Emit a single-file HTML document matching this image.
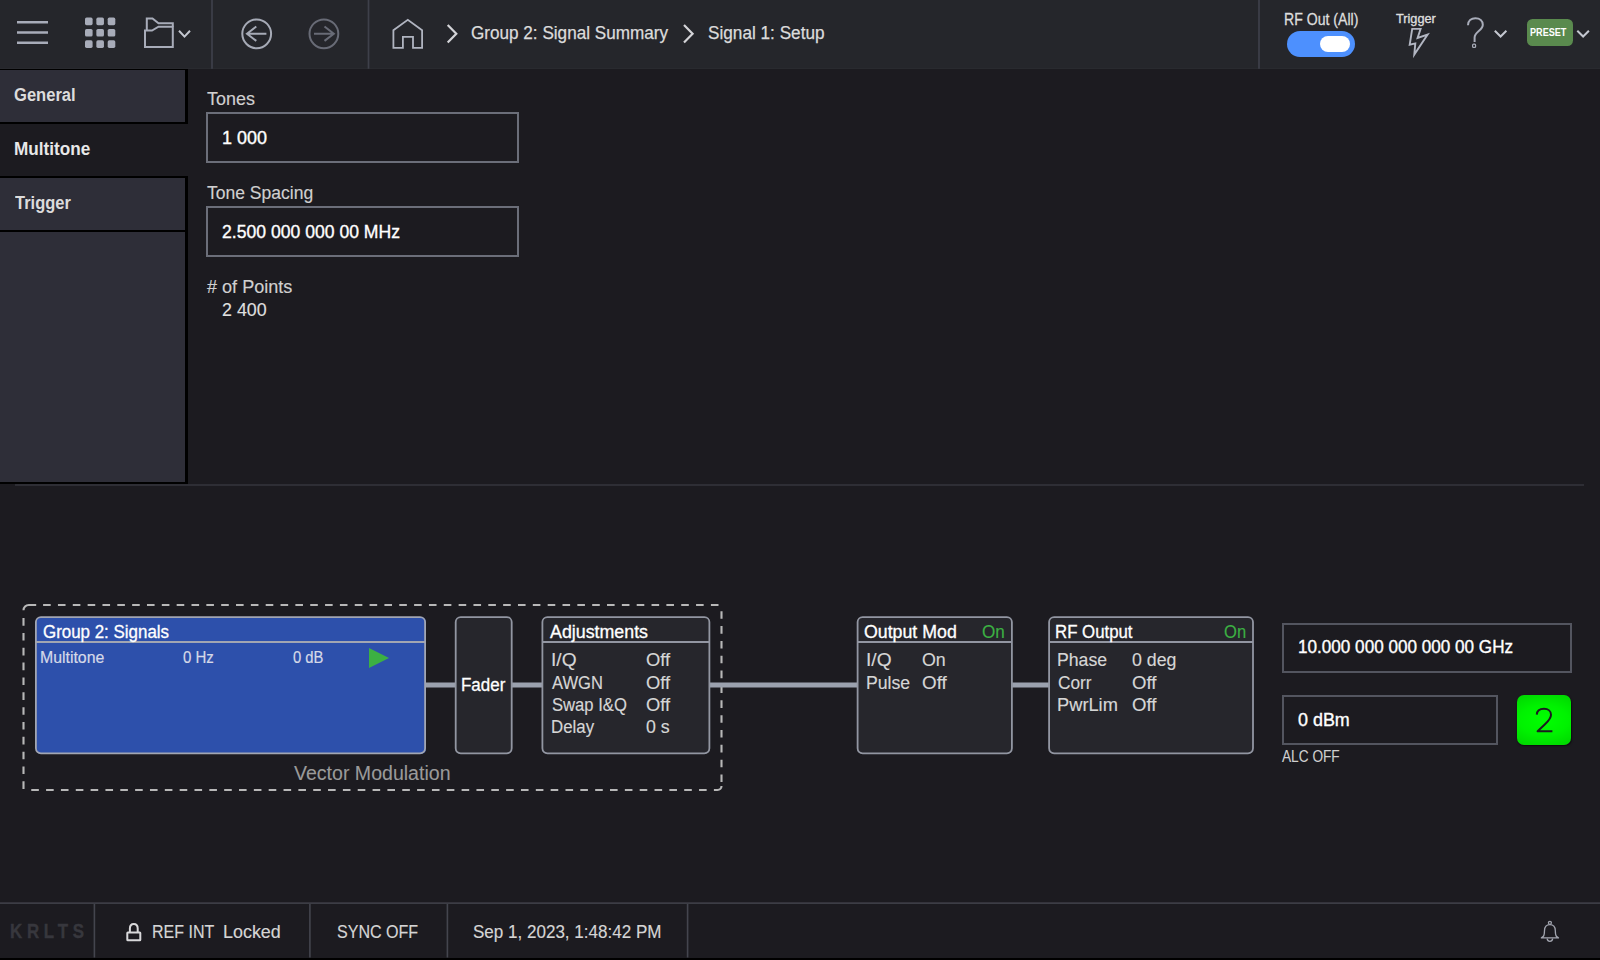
<!DOCTYPE html>
<html lang="en"><head><meta charset="utf-8"><title>Signal 1: Setup</title>
<style>
html,body{margin:0;padding:0;background:#1c1b20;}
body{width:1600px;height:960px;position:relative;overflow:hidden;font-family:"Liberation Sans",sans-serif;}
.t{position:absolute;white-space:pre;line-height:1;transform-origin:0 0;}
.abs{position:absolute;}
#topbar{position:absolute;left:0;top:0;width:1600px;height:69px;background:#25262b;box-sizing:border-box;border-bottom:1px solid #292a2f;}
#sidebar{position:absolute;left:0;top:69px;width:188px;height:415px;background:#000;}
.tab{position:absolute;left:0;width:185px;background:#2e2e38;}
.inp{position:absolute;box-sizing:border-box;border:2px solid #6b6e79;}
.inp2{position:absolute;box-sizing:border-box;border:2px solid #53555f;}
.blk{position:absolute;border-radius:5px;}
svg{position:absolute;left:0;top:0;overflow:visible;}
</style></head><body>

<div id="topbar">
  <div class="abs" style="left:1287px;top:31px;width:68px;height:25.5px;border-radius:13px;background:#4d90fe;"></div>
  <div class="abs" style="left:1320px;top:35.5px;width:30.4px;height:16.2px;border-radius:8.1px;background:#fff;"></div>
  <div class="abs" style="left:1527.25px;top:19px;width:45.5px;height:26.6px;border-radius:5.5px;background:#5a8a4e;"></div>
</div>

<svg width="1600" height="70" viewBox="0 0 1600 70" fill="none" stroke-linecap="butt" stroke-linejoin="miter">
  <!-- separators -->
  <path d="M212 0V68.8M368.5 0V68.8M1259 0V68.8" stroke="#3e404a" stroke-width="1.7"/>
  <!-- hamburger -->
  <g stroke="#a8acb9" stroke-width="2.6">
    <path d="M17 22.3H48M17 32.5H48M17 42.8H48"/>
  </g>
  <!-- grid -->
  <g fill="#a8acb9" stroke="none">
    <rect x="85.00" y="17.60" width="7.6" height="7.6" rx="1.6"/><rect x="85.00" y="28.95" width="7.6" height="7.6" rx="1.6"/><rect x="85.00" y="40.30" width="7.6" height="7.6" rx="1.6"/><rect x="96.35" y="17.60" width="7.6" height="7.6" rx="1.6"/><rect x="96.35" y="28.95" width="7.6" height="7.6" rx="1.6"/><rect x="96.35" y="40.30" width="7.6" height="7.6" rx="1.6"/><rect x="107.70" y="17.60" width="7.6" height="7.6" rx="1.6"/><rect x="107.70" y="28.95" width="7.6" height="7.6" rx="1.6"/><rect x="107.70" y="40.30" width="7.6" height="7.6" rx="1.6"/>
  </g>
  <!-- folder -->
  <g stroke="#a8acb9" stroke-width="2">
    <path d="M145 30.5H152L158.5 26.7H172.8V46.9H145Z"/>
    <path d="M146.8 30.5V18.5H152.5L158.5 23.2H172.8V26.7"/>
  </g>
  <path d="M179 30.8L184.5 36.6L190 30.8" stroke="#c4c7d0" stroke-width="2"/>
  <!-- back / forward -->
  <g stroke="#a6aab6" stroke-width="2">
    <circle cx="256.7" cy="33.8" r="14.4"/>
    <path d="M266.4 33.8H247M256.3 26.5L247 33.8L256.3 40.9"/>
  </g>
  <g stroke="#686b76" stroke-width="2">
    <circle cx="323.9" cy="33.8" r="14.4"/>
    <path d="M314 33.8H333.4M324.5 26.5L333.8 33.8L324.5 40.9"/>
  </g>
  <!-- home -->
  <path d="M393.4 47.8V30.3L407.8 19.8L422.1 30.3V47.8H413V36.9H402.9V47.8Z" stroke="#b0b4c0" stroke-width="1.8"/>
  <!-- breadcrumb chevrons -->
  <g stroke="#d4d4d8" stroke-width="2.2">
    <path d="M447.7 25L456.3 33.8L447.7 42.6"/>
    <path d="M684 25L692.6 33.8L684 42.6"/>
  </g>
  <!-- trigger bolt -->
  <path d="M1412.2 28.9H1420.6L1417.6 38L1427.6 34.6L1414.3 54.6L1415.3 43.4L1409.7 44.7Z" stroke="#b2b6c2" stroke-width="1.9" stroke-linejoin="miter" stroke-miterlimit="10"/>
  <!-- help -->
  <g stroke="#a8acb9" stroke-width="2">
    <path d="M1468 25.2C1468 20.8 1471.2 18.2 1475.4 18.2C1479.8 18.2 1482.8 21 1482.8 24.8C1482.8 30.5 1474.6 31.5 1474.6 37.5V42"/>
    <rect x="1472.6" y="44.2" width="3" height="3.2" rx="1" stroke-width="1.2"/>
  </g>
  <g stroke="#c4c7d0" stroke-width="2">
    <path d="M1494.8 30.8L1500.6 36.5L1506.4 30.8"/>
    <path d="M1577.3 30.8L1583.1 36.5L1588.9 30.8"/>
  </g>
</svg>

<div id="sidebar">
  <div class="tab" style="top:1px;height:52px"></div>
  <div class="abs" style="left:0;top:55px;width:188px;height:52px;background:#1c1b20"></div>
  <div class="tab" style="top:109px;height:52px"></div>
  <div class="tab" style="top:162.5px;height:250px"></div>
</div>
<div class="abs" style="left:15px;top:484px;width:1569px;height:2px;background:#2e2e35"></div>

<div class="inp" style="left:206px;top:112px;width:313px;height:51px"></div>
<div class="inp" style="left:206px;top:206px;width:313px;height:50.5px"></div>

<!-- diagram -->
<svg width="1600" height="960" viewBox="0 0 1600 960" fill="none">
  <g stroke="#b8b8b8" stroke-width="2.1" stroke-dasharray="7.6 7.24">
    <path d="M43.1 605H719"/>
    <path d="M721.5 611.25V783"/>
    <path d="M31.25 790H707"/>
    <path d="M23.5 618.1V789"/>
  </g>
  <g stroke="#b8b8b8" stroke-width="2.1">
    <path d="M23.5 610.3A5.3 5.3 0 0 1 28.8 605H36.2"/>
    <path d="M713.9 790H717.5A4 4 0 0 0 721.5 786"/>
  </g>
</svg>
<svg width="1600" height="960" viewBox="0 0 1600 960" fill="none">
  <path d="M425 685H456M511.5 685H543M709 685H858M1011.5 685H1049.5" stroke="#9ba1ae" stroke-width="5"/>
</svg>
<div class="blk" style="left:35.5px;top:616.7px;width:390.0px;height:137.0px;background:#2d50ab"></div>
<div class="blk" style="left:455.3px;top:616.7px;width:56.8px;height:137.0px;background:#26262c"></div>
<div class="blk" style="left:542.0px;top:616.7px;width:167.8px;height:137.0px;background:#26262c"></div>
<div class="blk" style="left:857.2px;top:616.7px;width:155.1px;height:137.0px;background:#26262c"></div>
<div class="blk" style="left:1048.7px;top:616.7px;width:204.7px;height:137.0px;background:#26262c"></div>
<div class="abs" style="left:369px;top:647.75px;width:0;height:0;border-left:20px solid #3cb043;border-top:10.1px solid transparent;border-bottom:10.1px solid transparent"></div>
<svg width="1600" height="960" viewBox="0 0 1600 960" fill="none" stroke-width="1.8">
  <rect x="35.9" y="617.1" width="389.2" height="136.2" rx="5" stroke="#a2a6b2"/><path d="M35.9 642H425.1" stroke="#a2a6b2"/>
  <rect x="455.7" y="617.1" width="56.0" height="136.2" rx="5" stroke="#9296a2"/>
  <rect x="542.4" y="617.1" width="167.0" height="136.2" rx="5" stroke="#9296a2"/><path d="M542.4 642H709.4" stroke="#9296a2"/>
  <rect x="857.6" y="617.1" width="154.3" height="136.2" rx="5" stroke="#9296a2"/><path d="M857.6 642H1011.9" stroke="#9296a2"/>
  <rect x="1049.1" y="617.1" width="203.9" height="136.2" rx="5" stroke="#9296a2"/><path d="M1049.1 642H1253.0" stroke="#9296a2"/>
</svg>
<div class="inp2" style="left:1282px;top:623px;width:289.5px;height:50px"></div>
<div class="inp2" style="left:1282px;top:695px;width:215.7px;height:50px"></div>
<div class="abs" style="left:1517px;top:694.8px;width:54.3px;height:50.2px;border-radius:7px;background:radial-gradient(ellipse 90% 60% at 50% 50%,#00ff00 0%,#00f200 50%,#00d400 100%);box-shadow:0.5px 1px 1.5px rgba(0,0,0,.55)"></div>
<svg width="1600" height="960" viewBox="0 0 1600 960" fill="none">
  <path d="M1536.8 714.6C1537 710.6 1540 708.7 1544 708.7C1548.2 708.7 1551 711.2 1551 714.8C1551 718.5 1548.5 721 1545 724.3L1537.6 731.2H1552.4" stroke="#1c1b20" stroke-width="2" stroke-linejoin="round"/>
</svg>

<!-- status bar -->
<div class="abs" style="left:0;top:957.5px;width:1600px;height:2.5px;background:#000"></div>
<svg width="1600" height="960" viewBox="0 0 1600 960" fill="none">
  <path d="M0 903.2H1600" stroke="#3c3d45" stroke-width="1.8"/>
  <path d="M94.4 904V957.5M309.9 904V957.5M447.4 904V957.5M687.6 904V957.5" stroke="#44454e" stroke-width="1.6"/>
  <g stroke="#d8d8da" stroke-width="2">
    <rect x="127.3" y="932.5" width="13" height="7.8" rx="0.5"/>
    <path d="M129.9 932.5V928.5C129.9 925.6 131.6 924 133.8 924C136 924 137.7 925.6 137.7 928.5V932.5"/>
  </g>
  <g stroke="#a2a5af" stroke-width="1.3" stroke-linejoin="round">
    <circle cx="1549.9" cy="922.8" r="1.5"/>
    <path d="M1549.9 924.6C1546.5 924.6 1544.6 927 1544.5 930.5C1544.4 933.5 1544.2 935.2 1543.6 936C1543 936.8 1542 937.3 1541.3 937.9H1558.5C1557.8 937.3 1556.8 936.8 1556.2 936C1555.6 935.2 1555.4 933.5 1555.3 930.5C1555.2 927 1553.3 924.6 1549.9 924.6Z"/>
    <path d="M1547.1 938.6C1547.4 940.4 1548.5 941.3 1549.9 941.3C1551.3 941.3 1552.4 940.4 1552.7 938.6"/>
  </g>
</svg>

<!-- text -->
<span class="t" style="left:471px;top:25px;font-size:17.5px;color:#dcdcdc;-webkit-text-stroke:0.25px #dcdcdc;transform:scaleX(0.9785)">Group 2: Signal Summary</span>
<span class="t" style="left:708px;top:25px;font-size:17.5px;color:#dcdcdc;-webkit-text-stroke:0.25px #dcdcdc;transform:scaleX(0.9819)">Signal 1: Setup</span>
<span class="t" style="left:1284px;top:11px;font-size:16.25px;color:#dedede;-webkit-text-stroke:0.3px #dedede;transform:scaleX(0.8666)">RF Out (All)</span>
<span class="t" style="left:1396px;top:13px;font-size:12.5px;color:#dedede;-webkit-text-stroke:0.35px #dedede;transform:scaleX(1.0172)">Trigger</span>
<span class="t" style="left:1530px;top:28px;font-size:10px;color:#ffffff;font-weight:bold;transform:scaleX(0.9104)">PRESET</span>
<span class="t" style="left:14px;top:87px;font-size:17.5px;color:#dcdcdc;font-weight:bold;transform:scaleX(0.9460)">General</span>
<span class="t" style="left:14px;top:141px;font-size:17.5px;color:#e8e8e8;font-weight:bold;transform:scaleX(0.9795)">Multitone</span>
<span class="t" style="left:15px;top:195px;font-size:17.5px;color:#dcdcdc;font-weight:bold;transform:scaleX(0.9415)">Trigger</span>
<span class="t" style="left:207px;top:91px;font-size:17.5px;color:#d0d0d0;-webkit-text-stroke:0.15px #d0d0d0;transform:scaleX(1.0249)">Tones</span>
<span class="t" style="left:222px;top:130px;font-size:17.5px;color:#ffffff;-webkit-text-stroke:0.35px #ffffff;transform:scaleX(1.0287)">1 000</span>
<span class="t" style="left:207px;top:185px;font-size:17.5px;color:#d0d0d0;-webkit-text-stroke:0.15px #d0d0d0;transform:scaleX(1.0012)">Tone Spacing</span>
<span class="t" style="left:222px;top:224px;font-size:17.5px;color:#ffffff;-webkit-text-stroke:0.35px #ffffff;transform:scaleX(1.0052)">2.500 000 000 00 MHz</span>
<span class="t" style="left:207px;top:279px;font-size:17.5px;color:#d0d0d0;-webkit-text-stroke:0.15px #d0d0d0;transform:scaleX(1.0326)"># of Points</span>
<span class="t" style="left:222px;top:302px;font-size:17.5px;color:#e0e0e0;-webkit-text-stroke:0.1px #e0e0e0;transform:scaleX(1.0193)">2 400</span>
<span class="t" style="left:43px;top:624px;font-size:17.5px;color:#ffffff;-webkit-text-stroke:0.3px #ffffff;transform:scaleX(0.9666)">Group 2: Signals</span>
<span class="t" style="left:40px;top:649px;font-size:16.25px;color:#d5d9e8;-webkit-text-stroke:0.2px #d5d9e8;transform:scaleX(0.9754)">Multitone</span>
<span class="t" style="left:183px;top:649px;font-size:16.25px;color:#d5d9e8;-webkit-text-stroke:0.2px #d5d9e8;transform:scaleX(0.9239)">0 Hz</span>
<span class="t" style="left:293px;top:649px;font-size:16.25px;color:#d5d9e8;-webkit-text-stroke:0.2px #d5d9e8;transform:scaleX(0.9104)">0 dB</span>
<span class="t" style="left:461px;top:677px;font-size:17.5px;color:#ffffff;-webkit-text-stroke:0.3px #ffffff;transform:scaleX(0.9691)">Fader</span>
<span class="t" style="left:550px;top:624px;font-size:17.5px;color:#ffffff;-webkit-text-stroke:0.3px #ffffff;transform:scaleX(1.0180)">Adjustments</span>
<span class="t" style="left:551px;top:652px;font-size:17.5px;color:#d6d6d6;-webkit-text-stroke:0.15px #d6d6d6;transform:scaleX(1.0933)">I/Q</span>
<span class="t" style="left:646px;top:652px;font-size:17.5px;color:#d6d6d6;-webkit-text-stroke:0.15px #d6d6d6;transform:scaleX(1.0467)">Off</span>
<span class="t" style="left:552px;top:675px;font-size:17.5px;color:#d6d6d6;-webkit-text-stroke:0.15px #d6d6d6;transform:scaleX(0.9454)">AWGN</span>
<span class="t" style="left:646px;top:675px;font-size:17.5px;color:#d6d6d6;-webkit-text-stroke:0.15px #d6d6d6;transform:scaleX(1.0467)">Off</span>
<span class="t" style="left:552px;top:697px;font-size:17.5px;color:#d6d6d6;-webkit-text-stroke:0.15px #d6d6d6;transform:scaleX(0.9500)">Swap I&amp;Q</span>
<span class="t" style="left:646px;top:697px;font-size:17.5px;color:#d6d6d6;-webkit-text-stroke:0.15px #d6d6d6;transform:scaleX(1.0467)">Off</span>
<span class="t" style="left:551px;top:719px;font-size:17.5px;color:#d6d6d6;-webkit-text-stroke:0.15px #d6d6d6;transform:scaleX(0.9621)">Delay</span>
<span class="t" style="left:646px;top:719px;font-size:17.5px;color:#d6d6d6;-webkit-text-stroke:0.15px #d6d6d6;transform:scaleX(1.0145)">0 s</span>
<span class="t" style="left:294px;top:764px;font-size:19.5px;color:#9a9a9a;-webkit-text-stroke:0.1px #9a9a9a;transform:scaleX(1.0027)">Vector Modulation</span>
<span class="t" style="left:864px;top:624px;font-size:17.5px;color:#ffffff;-webkit-text-stroke:0.3px #ffffff;transform:scaleX(1.0146)">Output Mod</span>
<span class="t" style="left:982px;top:624px;font-size:17.5px;color:#3cb043;-webkit-text-stroke:0.15px #3cb043;transform:scaleX(0.9785)">On</span>
<span class="t" style="left:866px;top:652px;font-size:17.5px;color:#d6d6d6;-webkit-text-stroke:0.15px #d6d6d6;transform:scaleX(1.0933)">I/Q</span>
<span class="t" style="left:922px;top:652px;font-size:17.5px;color:#d6d6d6;-webkit-text-stroke:0.15px #d6d6d6;transform:scaleX(1.0165)">On</span>
<span class="t" style="left:866px;top:675px;font-size:17.5px;color:#d6d6d6;-webkit-text-stroke:0.15px #d6d6d6;transform:scaleX(1.0095)">Pulse</span>
<span class="t" style="left:922px;top:675px;font-size:17.5px;color:#d6d6d6;-webkit-text-stroke:0.15px #d6d6d6;transform:scaleX(1.0750)">Off</span>
<span class="t" style="left:1055px;top:624px;font-size:17.5px;color:#ffffff;-webkit-text-stroke:0.3px #ffffff;transform:scaleX(0.9601)">RF Output</span>
<span class="t" style="left:1224px;top:624px;font-size:17.5px;color:#3cb043;-webkit-text-stroke:0.15px #3cb043;transform:scaleX(0.9462)">On</span>
<span class="t" style="left:1057px;top:652px;font-size:17.5px;color:#d6d6d6;-webkit-text-stroke:0.15px #d6d6d6;transform:scaleX(1.0100)">Phase</span>
<span class="t" style="left:1132px;top:652px;font-size:17.5px;color:#d6d6d6;-webkit-text-stroke:0.15px #d6d6d6;transform:scaleX(1.0142)">0 deg</span>
<span class="t" style="left:1058px;top:675px;font-size:17.5px;color:#d6d6d6;-webkit-text-stroke:0.15px #d6d6d6;transform:scaleX(0.9847)">Corr</span>
<span class="t" style="left:1132px;top:675px;font-size:17.5px;color:#d6d6d6;-webkit-text-stroke:0.15px #d6d6d6;transform:scaleX(1.0609)">Off</span>
<span class="t" style="left:1057px;top:697px;font-size:17.5px;color:#d6d6d6;-webkit-text-stroke:0.15px #d6d6d6;transform:scaleX(1.0438)">PwrLim</span>
<span class="t" style="left:1132px;top:697px;font-size:17.5px;color:#d6d6d6;-webkit-text-stroke:0.15px #d6d6d6;transform:scaleX(1.0609)">Off</span>
<span class="t" style="left:1298px;top:639px;font-size:17.5px;color:#ffffff;-webkit-text-stroke:0.35px #ffffff;transform:scaleX(0.9781)">10.000 000 000 000 00 GHz</span>
<span class="t" style="left:1298px;top:712px;font-size:17.5px;color:#ffffff;-webkit-text-stroke:0.35px #ffffff;transform:scaleX(1.0240)">0 dBm</span>
<span class="t" style="left:1282px;top:748px;font-size:16.25px;color:#d0d0d0;-webkit-text-stroke:0.1px #d0d0d0;transform:scaleX(0.8409)">ALC OFF</span>
<span class="t" style="left:10px;top:921px;font-size:20px;color:#37373d;font-weight:bold;letter-spacing:5.6px;-webkit-text-stroke:0.4px #37373d;transform:scaleX(0.8450)">KRLTS</span>
<span class="t" style="left:152px;top:924px;font-size:17.5px;color:#d5d5d5;-webkit-text-stroke:0.15px #d5d5d5;transform:scaleX(0.9146)">REF INT</span>
<span class="t" style="left:223px;top:924px;font-size:17.5px;color:#d5d5d5;-webkit-text-stroke:0.15px #d5d5d5;transform:scaleX(1.0243)">Locked</span>
<span class="t" style="left:337px;top:924px;font-size:17.5px;color:#d5d5d5;-webkit-text-stroke:0.15px #d5d5d5;transform:scaleX(0.9176)">SYNC OFF</span>
<span class="t" style="left:473px;top:924px;font-size:17.5px;color:#d5d5d5;-webkit-text-stroke:0.15px #d5d5d5;transform:scaleX(0.9733)">Sep 1, 2023, 1:48:42 PM</span>
</body></html>
